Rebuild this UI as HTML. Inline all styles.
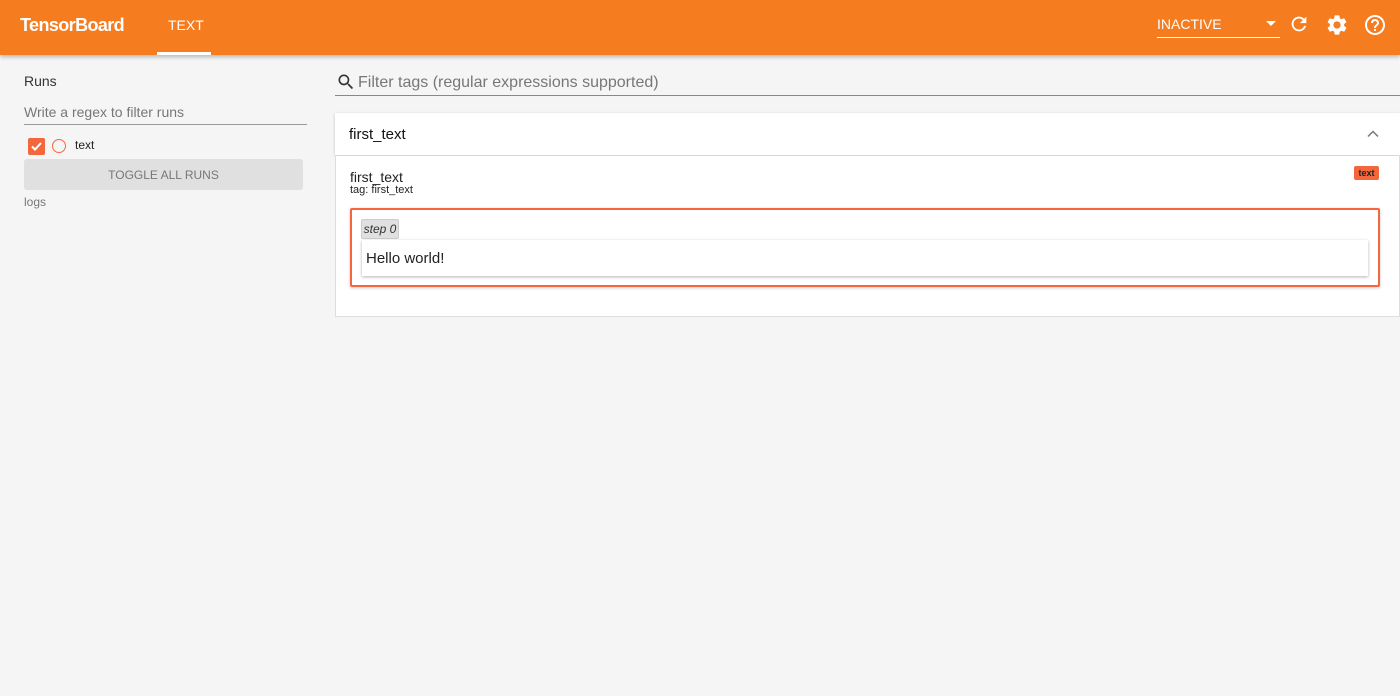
<!DOCTYPE html>
<html><head><meta charset="utf-8"><style>
*{box-sizing:border-box;margin:0;padding:0}
body{width:1400px;height:696px;background:#f5f5f5;font-family:"Liberation Sans",sans-serif;position:relative;overflow:hidden;color:#212121}
.hdr{position:absolute;left:0;top:0;width:1400px;height:55px;background:#f57c1f;color:#fff;box-shadow:0 2px 4px rgba(0,0,0,.25)}
.abs{position:absolute}
</style></head><body>
<div class="hdr">
 <div class="abs" style="left:20px;top:15px;font-size:18px;font-weight:bold;letter-spacing:-0.6px">TensorBoard</div>
 <div class="abs" style="left:168px;top:17px;font-size:14px">TEXT</div>
 <div class="abs" style="left:157px;top:52px;width:54px;height:3px;background:#fff"></div>
 <div class="abs" style="left:1157px;top:16px;font-size:14px">INACTIVE</div>
 <div class="abs" style="left:1266px;top:21px;width:0;height:0;border-left:5px solid transparent;border-right:5px solid transparent;border-top:5px solid #fff"></div>
 <div class="abs" style="left:1157px;top:37px;width:123px;height:1px;background:#fff"></div>
 <svg class="abs" style="left:1288px;top:13px" width="22" height="22" viewBox="0 0 24 24"><path fill="#fff" d="M17.65 6.35A7.958 7.958 0 0 0 12 4c-4.42 0-7.990 3.58-7.99 8s3.57 8 7.99 8c3.730 0 6.84-2.55 7.73-6h-2.08A5.99 5.99 0 0 1 12 18c-3.31 0-6-2.69-6-6s2.69-6 6-6c1.66 0 3.14.69 4.22 1.78L13 11h7V4l-2.35 2.35z"/></svg>
 <svg class="abs" style="left:1325px;top:13px" width="24" height="24" viewBox="0 0 24 24"><path fill="#fff" d="M19.14 12.94c.04-.3.06-.61.06-.94 0-.32-.02-.64-.07-.94l2.03-1.58a.49.49 0 0 0 .12-.61l-1.92-3.32a.488.488 0 0 0-.59-.22l-2.39.96c-.5-.38-1.03-.7-1.620-.94l-.36-2.54a.484.484 0 0 0-.48-.41h-3.84c-.24 0-.43.17-.47.41l-.36 2.54c-.59.24-1.13.57-1.62.94l-2.39-.96c-.22-.08-.47 0-.59.22L2.74 8.87c-.12.21-.08.47.12.61l2.03 1.58c-.05.3-.09.63-.09.94s.02.64.07.94l-2.03 1.58a.49.49 0 0 0-.12.61l1.92 3.32c.12.22.37.29.59.22l2.39-.96c.5.38 1.03.7 1.62.94l.36 2.54c.05.24.24.41.48.41h3.84c.24 0 .44-.17.47-.41l.36-2.54c.59-.24 1.13-.56 1.62-.94l2.39.96c.22.08.47 0 .59-.22l1.92-3.32c.12-.22.07-.47-.12-.61l-2.01-1.58zM12 15.6c-1.98 0-3.6-1.62-3.6-3.6s1.62-3.6 3.6-3.6 3.6 1.62 3.6 3.6-1.62 3.6-3.6 3.6z"/></svg>
 <svg class="abs" style="left:1363px;top:13px" width="24" height="24" viewBox="0 0 24 24"><path fill="#fff" d="M11 18h2v-2h-2v2zm1-16C6.48 2 2 6.48 2 12s4.48 10 10 10 10-4.48 10-10S17.52 2 12 2zm0 18c-4.41 0-8-3.59-8-8s3.59-8 8-8 8 3.59 8 8-3.59 8-8 8zm0-14c-2.21 0-4 1.79-4 4h2c0-1.1.9-2 2-2s2 .9 2 2c0 2-3 1.75-3 5h2c0-2.25 3-2.5 3-5 0-2.21-1.79-4-4-4z"/></svg>
</div>

<div class="abs" style="left:24px;top:73px;font-size:14px;color:#333">Runs</div>
<div class="abs" style="left:24px;top:104px;font-size:14px;color:#777">Write a regex to filter runs</div>
<div class="abs" style="left:24px;top:124px;width:283px;height:1px;background:#999"></div>
<div class="abs" style="left:28px;top:138px;width:17px;height:17px;background:#f4673d;border-radius:2px"></div>
<svg class="abs" style="left:28px;top:138px" width="17" height="17" viewBox="0 0 17 17"><path d="M4 8.5l3 3 6-6.5" stroke="#fff" stroke-width="2" fill="none"/></svg>
<div class="abs" style="left:52px;top:139px;width:14px;height:14px;border:1.5px solid #f4673d;border-radius:50%"></div>
<div class="abs" style="left:75px;top:138px;font-size:12px;color:#222">text</div>
<div class="abs" style="left:24px;top:159px;width:279px;height:31px;background:#e0e0e0;border-radius:3px;font-size:12px;color:#777;text-align:center;line-height:32px">TOGGLE ALL RUNS</div>
<div class="abs" style="left:24px;top:195px;font-size:12px;color:#777">logs</div>

<svg class="abs" style="left:336px;top:72px" width="20" height="20" viewBox="0 0 24 24"><path fill="#333" d="M15.5 14h-.79l-.28-.27A6.471 6.471 0 0 0 16 9.5 6.5 6.5 0 1 0 9.5 16c1.61 0 3.09-.59 4.23-1.57l.27.28v.79l5 4.99L20.49 19l-4.99-5zm-6 0C7.01 14 5 11.99 5 9.5S7.01 5 9.5 5 14 7.01 14 9.5 11.99 14 9.5 14z"/></svg>
<div class="abs" style="left:358px;top:74px;font-size:16px;color:#777">Filter tags (regular expressions supported)</div>
<div class="abs" style="left:335px;top:95px;width:1065px;height:1px;background:#888"></div>

<div class="abs" style="left:335px;top:113px;width:1065px;height:42px;background:#fff;box-shadow:0 1px 3px rgba(0,0,0,.2)"></div>
<div class="abs" style="left:349px;top:126px;font-size:15px;color:#111">first_text</div>
<svg class="abs" style="left:1366px;top:127px" width="14" height="14" viewBox="0 0 14 14"><path d="M2 9.5l5-5 5 5" stroke="#777" stroke-width="1.5" fill="none"/></svg>

<div class="abs" style="left:335px;top:156px;width:1065px;height:161px;background:#fff;border:1px solid #ddd;border-top:none"></div>
<div class="abs" style="left:350px;top:169px;font-size:14px;color:#222">first_text</div>
<div class="abs" style="left:350px;top:184px;font-size:11px;color:#222">tag: first_text</div>
<div class="abs" style="left:1354px;top:166px;width:25px;height:14px;background:#f4673d;border-radius:2px;font-size:9px;font-weight:bold;color:#222;text-align:center;line-height:14px">text</div>

<div class="abs" style="left:350px;top:208px;width:1030px;height:79px;border:2px solid #f4673d;border-radius:2px;box-shadow:0 1px 3px rgba(0,0,0,.2)"></div>
<div class="abs" style="left:361px;top:219px;width:38px;height:20px;background:#e0e0e0;border:1px solid #ccc;border-radius:2px;font-size:12px;font-style:italic;color:#333;text-align:center;line-height:19px">step 0</div>
<div class="abs" style="left:362px;top:240px;width:1006px;height:36px;background:#fff;box-shadow:0 1px 3px rgba(0,0,0,.3)"></div>
<div class="abs" style="left:366px;top:250px;font-size:15px;color:#222">Hello world!</div>
</body></html>
